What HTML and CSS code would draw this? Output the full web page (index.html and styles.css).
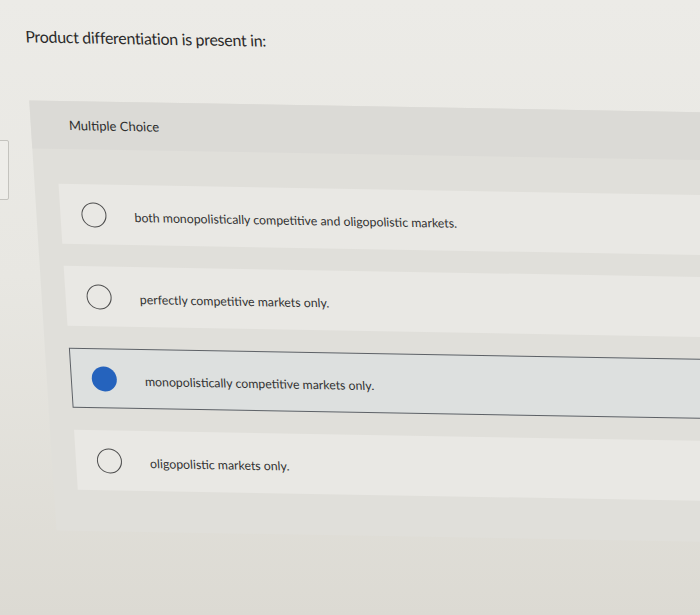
FILE: index.html
```html
<!DOCTYPE html>
<html lang="en">
<head>
<meta charset="utf-8">
<title>Multiple Choice</title>
<link rel="stylesheet" href="styles.css">
</head>
<body>
<div class="side-tab"></div>
<main class="page">
  <h1 class="question">Product differentiation is present in:</h1>
  <section class="panel">
    <div class="panel-head">Multiple Choice</div>
    <div class="options">
      <div class="option"><span class="radio"></span><span class="label">both monopolistically competitive and oligopolistic markets.</span></div>
      <div class="option"><span class="radio"></span><span class="label">perfectly competitive markets only.</span></div>
      <div class="option selected"><span class="radio"></span><span class="label">monopolistically competitive markets only.</span></div>
      <div class="option"><span class="radio"></span><span class="label">oligopolistic markets only.</span></div>
    </div>
  </section>
</main>
</body>
</html>
```

FILE: styles.css
```css
html, body {
  margin: 0;
  padding: 0;
}
body {
  width: 700px;
  height: 615px;
  overflow: hidden;
  position: relative;
  background: linear-gradient(180deg, #ecebe7 0%, #e8e7e2 45%, #dcdad3 100%);
  font-family: Lato, "Open Sans", sans-serif;
  color: #2f2f2f;
}
.side-tab {
  position: absolute;
  left: -6px;
  top: 140px;
  width: 13px;
  height: 58px;
  border: 1px solid #c4c3be;
  border-radius: 2px;
  background: #eeede9;
}
.page {
  transform: matrix(1, 0.0175, 0.063, 1, 0, 0);
  transform-origin: 0 0;
  padding-top: 25px;
}
.question {
  margin: 0;
  padding-left: 23px;
  font-size: 16px;
  line-height: 22px;
  letter-spacing: -0.3px;
  font-weight: 400;
  color: #2b2b2b;
}
.panel {
  margin: 53px 0 0 23px;
  width: 820px;
  background: #e0dfda;
}
.panel-head {
  height: 48px;
  display: flex;
  align-items: center;
  padding-left: 38px;
  background: #dbdad6;
  font-size: 13px;
  color: #2f2f2f;
}
.options {
  display: flex;
  flex-direction: column;
  gap: 22px;
  padding: 35px 0 41px 24px;
}
.option {
  height: 60px;
  box-sizing: border-box;
  display: flex;
  align-items: center;
  padding-left: 21px;
  background: #e9e8e4;
  font-size: 12.3px;
}
.radio {
  flex: none;
  width: 25px;
  height: 25px;
  box-sizing: border-box;
  border: 1.5px solid #4d4d4d;
  border-radius: 50%;
  margin-right: 28px;
}
.label {
  padding-top: 5px;
  color: #333;
}
.option.selected {
  background: #dde0df;
  border: 1px solid #5d6166;
  padding-left: 20px;
}
.option.selected .radio {
  border: 0;
  background: #2563bd;
}
```
